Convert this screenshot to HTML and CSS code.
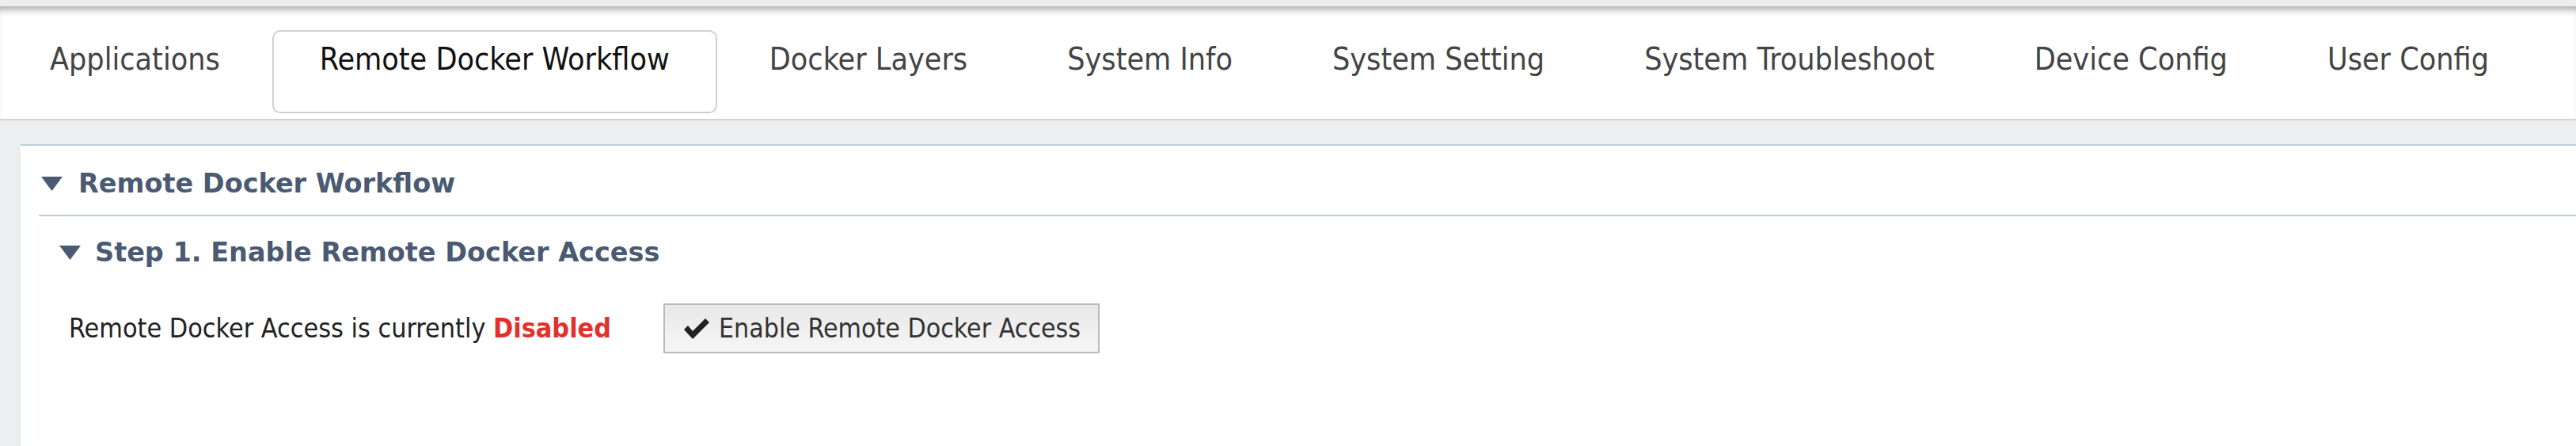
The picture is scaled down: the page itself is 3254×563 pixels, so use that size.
FILE: index.html
```html
<!DOCTYPE html>
<html lang="en">
<head>
<meta charset="utf-8">
<title>Remote Docker Workflow</title>
<link rel="stylesheet" href="styles.css">
</head>
<body>
<div class="topband"></div>
<nav class="tabbar">
  <ul class="tabs">
    <li class="tab">Applications</li>
    <li class="tab active">Remote Docker Workflow</li>
    <li class="tab">Docker Layers</li>
    <li class="tab">System Info</li>
    <li class="tab">System Setting</li>
    <li class="tab">System Troubleshoot</li>
    <li class="tab">Device Config</li>
    <li class="tab">User Config</li>
  </ul>
</nav>
<main class="content">
  <section class="panel outer">
    <h2 class="panel-title">
      <svg class="caret" viewBox="0 0 27 18" width="27" height="18"><polygon points="0,0 27,0 13.5,18" fill="#4a5a72"/></svg>
      <span>Remote Docker Workflow</span>
    </h2>
    <section class="panel inner">
      <h3 class="panel-title step">
        <svg class="caret" viewBox="0 0 27 18" width="27" height="18"><polygon points="0,0 27,0 13.5,18" fill="#4a5a72"/></svg>
        <span>Step 1. Enable Remote Docker Access</span>
      </h3>
      <div class="status-row">
        <p class="status">Remote Docker Access is currently <strong class="disabled">Disabled</strong></p>
        <button class="btn" type="button">
          <svg class="check" viewBox="0 0 36 28" width="36" height="28"><path d="M2 15 L7 10 L13 17 L29 1 L34 6 L13 27 Z" fill="#222"/></svg>
          <span>Enable Remote Docker Access</span>
        </button>
      </div>
    </section>
  </section>
</main>
</body>
</html>
```
FILE: styles.css
```css
html, body {
  margin: 0;
  padding: 0;
}
body {
  height: 100vh;
  display: flex;
  flex-direction: column;
  background: #eceef0;
  font-family: "DejaVu Sans", Verdana, sans-serif;
  font-stretch: condensed;
  color: #222;
  overflow: hidden;
}
.topband {
  flex: none;
  height: 8px;
  background: #ebedef;
}
.tabbar {
  flex: none;
  background: #fff;
  height: 142px;
  border-bottom: 2px solid #d2d2d2;
  box-shadow: inset 0 10px 10px -6px rgba(0,0,0,0.35);
}
.tabs {
  list-style: none;
  margin: 0;
  padding: 30px 0 0 0;
  display: flex;
  align-items: flex-start;
}
.tab {
  font-size: 39.1px;
  line-height: 48px;
  color: #444;
  padding: 11px 58px 42px;
  margin: 0 3px;
  border: 2px solid transparent;
  border-radius: 10px;
  white-space: nowrap;
}
.tab.active {
  color: #111;
  border-color: #d0d0d0;
  background: #fff;
}
.content {
  flex: 1;
  min-height: 0;
  display: flex;
  flex-direction: column;
  padding: 30px 0 0 26px;
}
.panel {
  background: #fff;
  border-top: 2px solid #b9d0dc;
  display: flex;
  flex-direction: column;
}
.outer {
  flex: 1;
  min-height: 0;
  box-shadow: -3px 6px 8px -4px rgba(0,0,0,0.08);
}
.inner {
  flex: 1;
  min-height: 0;
  margin-left: 23px;
  box-shadow: 0 6px 8px -4px rgba(0,0,0,0.10);
}
.panel-title {
  margin: 0;
  display: flex;
  align-items: center;
  gap: 20px;
  font-size: 33.5px;
  font-stretch: normal;
  font-weight: bold;
  color: #4a5a72;
  line-height: 40px;
}
.outer > .panel-title {
  padding: 28px 0 19px 26px;
}
.step {
  padding: 26px 0 26px 26px;
  gap: 18px;
}
.caret {
  display: block;
  flex: none;
}
.status-row {
  display: flex;
  align-items: center;
  gap: 66px;
  padding: 18px 0 0 38px;
}
.status {
  margin: 0;
  font-size: 33.8px;
  color: #222;
  white-space: nowrap;
}
.disabled {
  color: #e3302a;
}
.btn {
  display: flex;
  align-items: center;
  gap: 10px;
  height: 63px;
  padding: 0 22px;
  font-family: inherit;
  font-stretch: condensed;
  font-size: 33.6px;
  color: #333;
  background: linear-gradient(#e8e8e8, #f6f6f6);
  border: 2px solid #b9b9b9;
  border-radius: 0;
}
.check {
  display: block;
}
```
